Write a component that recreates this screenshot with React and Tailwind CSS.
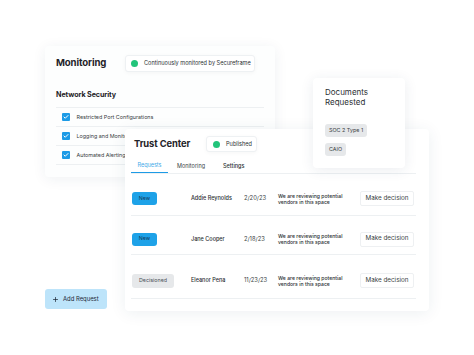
import { Plus, Check } from 'lucide-react';

const rows = [
  { status: 'New', name: 'Addie Reynolds', date: '2/20/23', h: 'h-[42px]' },
  { status: 'New', name: 'Jane Cooper', date: '2/18/23', h: 'h-[39px]' },
  { status: 'Decisioned', name: 'Eleanor Pena', date: '11/23/23', h: 'h-[44px]' },
];

const checks = ['Restricted Port Configurations', 'Logging and Monitoring', 'Automated Alerting for Failures'];

const Pill = ({ children, className }) => (
  <div className={`flex items-center rounded-[3px] border border-[#eef1f3] bg-white shadow-[0_1px_4px_rgba(0,0,0,0.04)] ${className}`}>
    <span className="h-[7px] w-[7px] rounded-full bg-[#22c47a]" />
    <span className="text-[5.6px] text-[#2b2f33]">{children}</span>
  </div>
);

const App = () => {
  return (
    <div className="relative h-[355px] w-[474px] overflow-hidden bg-white font-['Inter',sans-serif] text-[#1f2328]">
      {/* monitoring card */}
      <div className="absolute left-[45px] top-[46px] h-[131px] w-[230px] rounded-[4px] bg-[#fdfefe] px-[11px] pt-[9px] shadow-[0_2px_14px_rgba(30,60,90,0.07)]">
        <div className="flex h-[17px] items-center">
          <h2 className="w-[69px] text-[9.6px] font-bold tracking-[-0.1px]">Monitoring</h2>
          <Pill className="h-[17px] w-[130px] gap-[6px] pl-[5px]">Continuously monitored by Secureframe</Pill>
        </div>
        <h3 className="mt-[18px] text-[7.2px] font-bold tracking-[-0.1px]">Network Security</h3>
        <div className="mt-[6px] w-[208px] border-t border-[#edf0f2]">
          {checks.map((c) => (
            <div key={c} className="flex h-[19px] items-center gap-[7px] border-b border-[#edf0f2] pl-[6px]">
              <span className="flex h-[7.5px] w-[7.5px] items-center justify-center rounded-[1px] bg-[#1d9be6]">
                <Check className="h-[6px] w-[6px] text-white" strokeWidth={4} />
              </span>
              <span className="text-[5.4px] text-[#3a3f44]">{c}</span>
            </div>
          ))}
        </div>
      </div>

      {/* trust center card */}
      <div className="absolute left-[125px] top-[129px] h-[182px] w-[304px] rounded-[4px] bg-white pl-[6px] pr-[13px] pt-[7px] shadow-[0_2px_16px_rgba(30,60,90,0.08)]">
        <div className="flex h-[16px] items-center pl-[3px]">
          <h2 className="w-[72px] text-[9.4px] font-bold tracking-[-0.1px]">Trust Center</h2>
          <Pill className="h-[16px] w-[51px] gap-[6px] pl-[6px]">Published</Pill>
        </div>
        <div className="mt-[7px] flex h-[15px] items-stretch border-b border-[#edf0f2] text-[5.5px]">
          <div className="flex w-[37px] items-center justify-center border-b-[1.5px] border-[#1d9be6] text-[#3fa9e8]">Requests</div>
          <div className="ml-[9px] flex items-center text-[#3a3f44]">Monitoring</div>
          <div className="ml-[18px] flex items-center font-medium text-[#2b2f33]">Settings</div>
        </div>
        {rows.map((r) => (
          <div key={r.name} className={`grid ${r.h} grid-cols-[59px_53px_34px_82px_54px] items-center border-b border-[#edf0f2] pl-[1px] pt-[8px] text-[5.5px]`}>
            <div>
              {r.status === 'New' ? (
                <span className="flex h-[13px] w-[25px] items-center justify-center rounded-[3px] bg-[#1ea2e8] text-[5.3px] text-[#123b5a]">New</span>
              ) : (
                <span className="flex h-[14px] w-[42px] items-center justify-center rounded-[3px] bg-[#e6e8ea] text-[5.3px] text-[#4a4f55]">Decisioned</span>
              )}
            </div>
            <div className="font-medium text-[#2b2f33]">{r.name}</div>
            <div className="text-[5.8px] text-[#3a3f44]">{r.date}</div>
            <div className="text-[5.1px] leading-[6px] font-medium text-[#2b2f33]">We are reviewing potential<br />vendors in this space</div>
            <div className="flex h-[15px] items-center justify-center rounded-[2px] border border-[#eef0f2] bg-white text-[6.3px] text-[#3a3f44]">Make decision</div>
          </div>
        ))}
      </div>

      {/* documents requested */}
      <div className="absolute left-[313px] top-[78px] h-[90px] w-[92px] rounded-[4px] bg-white pl-[12px] pt-[9px] shadow-[0_2px_14px_rgba(30,60,90,0.09)]">
        <div className="text-[8px] leading-[10px] text-[#2b2f33]">Documents<br />Requested</div>
        <div className="mt-[17px] flex flex-col items-start gap-[6px]">
          <span className="flex h-[13px] items-center rounded-[3px] bg-[#e6e8ea] px-[4px] text-[5.4px] text-[#3a3f44]">SOC 2 Type 1</span>
          <span className="flex h-[13px] items-center rounded-[3px] bg-[#e6e8ea] px-[4px] text-[5.4px] text-[#3a3f44]">CAIO</span>
        </div>
      </div>

      {/* add request */}
      <button className="absolute left-[45px] top-[289px] flex h-[20px] w-[62px] items-center gap-[4px] rounded-[3px] bg-[#bde4fa] pl-[7px] text-[5.9px] text-[#1f2937]">
        <Plus className="h-[7px] w-[7px]" strokeWidth={2.5} />
        Add Request
      </button>
    </div>
  );
};

export default App;
